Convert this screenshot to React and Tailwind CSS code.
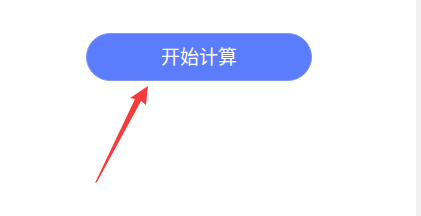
import React from "react";

export default function App() {
  return (
    <div className="flex h-[216px] w-[421px] bg-white" style={{ fontFamily: '"Noto Sans CJK SC", "Liberation Sans", sans-serif' }}>
      <main className="relative flex-1">
        <div className="pl-[86px] pt-[33px]">
          <button className="flex h-[48px] w-[226px] items-center justify-center rounded-full border border-[#7d97fb] bg-[#5b7cfd] pb-[2px] text-[19px] text-white">
            开始计算
          </button>
        </div>
        {/* annotation arrow */}
        <svg className="absolute left-0 top-0" width="416" height="216" viewBox="0 0 416 216">
          <polygon points="95,183 135,99 130,98 148,86 146,105 141,101 97,182" fill="#f53b3b" />
        </svg>
      </main>
      <div className="w-[5px] bg-[#f1f1f1]" />
    </div>
  );
}
